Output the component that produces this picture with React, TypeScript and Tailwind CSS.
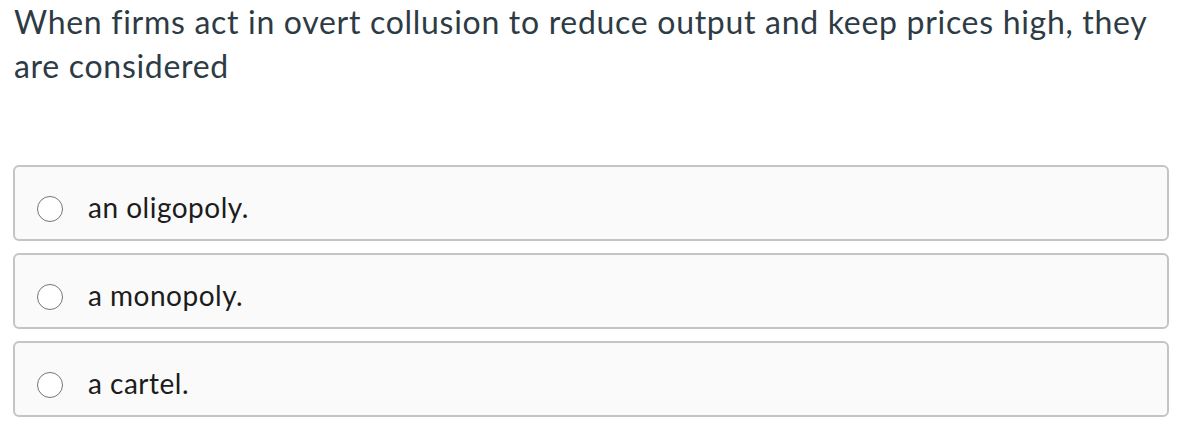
export default function App() {
  const options = ["an oligopoly.", "a monopoly.", "a cartel."];
  return (
    <div className="w-[1194px] h-[438px] bg-white px-[13px] font-['Lato','Noto_Sans',sans-serif] [font-variant-ligatures:none]">
      <p className="text-[32px] leading-[44px] tracking-[0.7px] text-[#2d3b45] pl-px">
        When firms act in overt collusion to reduce output and keep prices high, they are considered
      </p>
      <div className="mt-[77px] flex flex-col gap-[12px] w-[1156px]">
        {options.map((o) => (
          <div
            key={o}
            className="h-[76px] rounded-[6px] border-2 border-[#c4c4c4] bg-[#fafafa] flex items-center pl-[22px] pt-[12px]"
          >
            <span className="w-[26px] h-[26px] rounded-full border border-[#767676] bg-white shrink-0" />
            <span className="ml-[25px] -mt-[4px] text-[28px] leading-[34px] tracking-[0.5px] text-[#1c1c1c]">{o}</span>
          </div>
        ))}
      </div>
    </div>
  );
}
